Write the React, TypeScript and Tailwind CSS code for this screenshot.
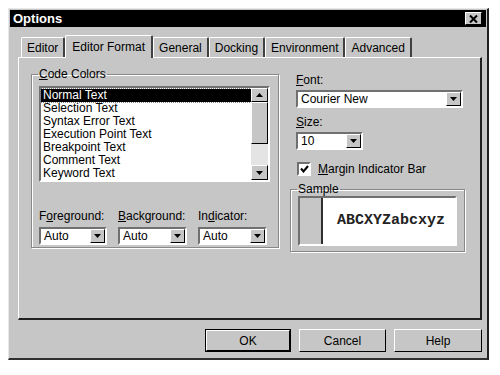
import type { ReactNode } from 'react'

const FONT = { fontFamily: '"Liberation Sans", Arial, sans-serif' }

const raised = 'border border-t-white border-l-white border-r-black border-b-black bg-[#c6c6c6]'
const sunken = 'border-2 border-t-[#707070] border-l-[#707070] border-r-white border-b-white'

const ITEMS = [
  'Normal Text',
  'Selection Text',
  'Syntax Error Text',
  'Execution Point Text',
  'Breakpoint Text',
  'Comment Text',
  'Keyword Text',
]

const TABS = ['Editor', 'Editor Format', 'General', 'Docking', 'Environment', 'Advanced']

function Arrow({ up = false }: { up?: boolean }) {
  return (
    <svg width="7" height="4" viewBox="0 0 7 4">
      <path d={up ? 'M0 4 L3.5 0 L7 4 Z' : 'M0 0 L7 0 L3.5 4 Z'} fill="#000" />
    </svg>
  )
}

function Combo({ value, width }: { value: string; width: string }) {
  return (
    <div className={`${sunken} bg-white h-[18px] flex items-center ${width}`}>
      <span className="flex-1 pl-[3px] text-[12px] text-black">{value}</span>
      <div className={`${raised} w-[15px] h-[14px] flex items-center justify-center`}>
        <Arrow />
      </div>
    </div>
  )
}

function U({ children }: { children: ReactNode }) {
  return <span className="underline underline-offset-1">{children}</span>
}

export default function App() {
  return (
    <div className="w-[500px] h-[375px] bg-white pt-[8px] pl-[8px]" style={FONT}>
      <div className="w-[481px] h-[352px] bg-[#c6c6c6] border-l border-t border-l-[#e8e8e8] border-t-[#e8e8e8] border-r-2 border-b-2 border-r-[#202020] border-b-[#303030] flex flex-col">
        {/* title bar */}
        <div className="mx-[1px] mt-[1px] h-[17px] bg-black flex items-center justify-between pl-[3px] pr-[4px]">
          <span className="text-white font-bold text-[13px]">Options</span>
          <div className={`${raised} w-[17px] h-[13px] flex items-center justify-center`}>
            <svg width="9" height="8" viewBox="0 0 9 8">
              <path d="M1 0.5 L8 7.5 M8 0.5 L1 7.5" stroke="#000" strokeWidth="2" />
            </svg>
          </div>
        </div>

        {/* tabs */}
        <div className="mt-[7px] ml-[12px] flex items-end h-[23px]">
          {TABS.map((t) => {
            const active = t === 'Editor Format'
            return (
              <div
                key={t}
                className={`border-t border-l border-r-2 border-t-white border-l-white border-r-[#404040] rounded-t-[2px] flex items-center justify-center text-[12px] text-black ${
                  active ? 'h-[23px] px-[6px] -mb-[1px] bg-[#c6c6c6] z-10' : 'h-[20px] px-[5px]'
                }`}
              >
                {t}
              </div>
            )
          })}
        </div>

        {/* panel */}
        <div className="ml-[9px] w-[464px] h-[263px] border-l border-t border-l-white border-t-white border-r-2 border-b-2 border-r-[#202020] border-b-[#202020] flex pt-[9px]">
          {/* left column */}
          <fieldset className="ml-[12px] w-[248px] h-[181px] border border-[#888] shadow-[inset_1px_1px_0_white,1px_1px_0_white] px-[7px] pb-[8px]">
            <legend className="-ml-[1px] px-[1px] text-[12px] text-black leading-[14px]">
              <U>C</U>ode Colors
            </legend>
            <div className={`${sunken} mt-[5px] w-[231px] h-[96px] bg-white flex`}>
              <div className="flex-1 flex flex-col pt-[1px]">
                {ITEMS.map((it, i) => (
                  <div
                    key={it}
                    className={`h-[13px] leading-[13px] text-[12px] pl-[2px] ${
                      i === 0 ? 'bg-black text-white outline-1 outline-dotted outline-[#888]' : 'text-black'
                    }`}
                  >
                    {it}
                  </div>
                ))}
              </div>
              <div className="w-[17px] flex flex-col">
                <div className={`${raised} h-[14px] flex items-center justify-center`}>
                  <Arrow up />
                </div>
                <div className={`${raised} h-[42px]`} />
                <div className="flex-1 bg-[#e4e4e4]" />
                <div className={`${raised} h-[15px] flex items-center justify-center`}>
                  <Arrow />
                </div>
              </div>
            </div>
            <div className="mt-[25px] flex gap-[11px] text-[12px] text-black">
              <div className="flex flex-col gap-[2px]">
                <span>F<U>o</U>reground:</span>
                <Combo value="Auto" width="w-[68px]" />
              </div>
              <div className="flex flex-col gap-[2px]">
                <span><U>B</U>ackground:</span>
                <Combo value="Auto" width="w-[69px]" />
              </div>
              <div className="flex flex-col gap-[2px]">
                <span>In<U>d</U>icator:</span>
                <Combo value="Auto" width="w-[69px]" />
              </div>
            </div>
          </fieldset>

          {/* right column */}
          <div className="ml-[11px] flex flex-col text-[12px] text-black">
            <div className="ml-[6px] mt-[6px] leading-[14px]">
              <U>F</U>ont:
            </div>
            <div className="ml-[6px] mt-[3px]">
              <Combo value="Courier New" width="w-[167px]" />
            </div>
            <div className="ml-[6px] mt-[7px] leading-[14px]">
              <U>S</U>ize:
            </div>
            <div className="ml-[6px] mt-[3px]">
              <Combo value="10" width="w-[67px]" />
            </div>
            <div className="ml-[7px] mt-[10px] flex items-center gap-[7px]">
              <div className={`${sunken} w-[14px] h-[14px] bg-white flex items-center justify-center`}>
                <svg width="9" height="8" viewBox="0 0 9 8">
                  <path d="M1 3.5 L3.5 6.5 L8 1" stroke="#000" strokeWidth="2" fill="none" />
                </svg>
              </div>
              <span>
                <U>M</U>argin Indicator Bar
              </span>
            </div>
            <fieldset className="mt-[4px] w-[175px] h-[70px] border border-[#888] shadow-[inset_1px_1px_0_white,1px_1px_0_white] px-[7px] pb-[4px]">
              <legend className="-ml-[1px] px-[1px] leading-[14px]">Sample</legend>
              <div className={`${sunken} h-[50px] bg-white flex`}>
                <div className="w-[23px] bg-[#c6c6c6] border-r-2 border-r-[#303030]" />
                <div
                  className="flex-1 flex items-center justify-center pl-[4px] text-[15px] font-bold text-[#222]"
                  style={{ fontFamily: '"Liberation Mono", "Courier New", monospace' }}
                >
                  ABCXYZabcxyz
                </div>
              </div>
            </fieldset>
          </div>
        </div>

        {/* buttons */}
        <div className="mt-[9px] ml-[196px] flex gap-[8px] text-[12px] text-black">
          <div className="w-[86px] h-[23px] border border-black flex">
            <div className={`${raised} flex-1 flex items-center justify-center`}>OK</div>
          </div>
          <div className={`${raised} w-[87px] h-[23px] flex items-center justify-center`}>Cancel</div>
          <div className={`${raised} w-[88px] h-[23px] flex items-center justify-center`}>Help</div>
        </div>
      </div>
    </div>
  )
}
